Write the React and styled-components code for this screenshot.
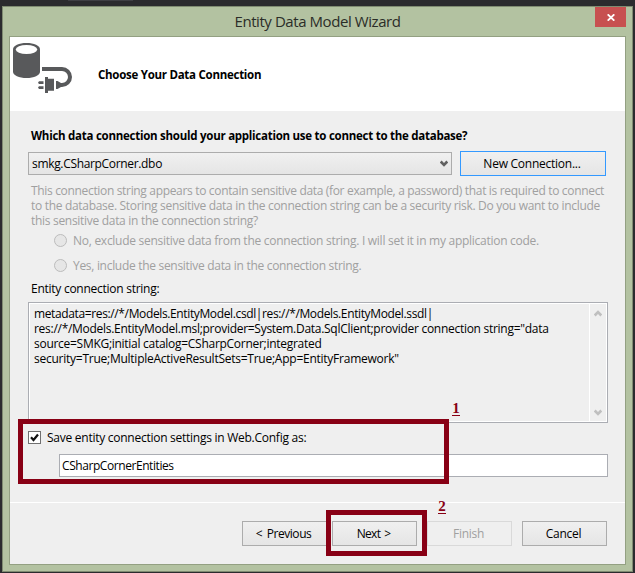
import { useState } from 'react'
import styled, { createGlobalStyle } from 'styled-components'

const GlobalStyle = createGlobalStyle`
    * {
        box-sizing: border-box;
    }

    body {
        margin: 0;
        background-color: #2b2b2e;
        font-family: "Open Sans", "Noto Sans", sans-serif;
        font-size: 12px;
        color: #000;
    }

    button, input {
        font: inherit;
    }
`

const Desktop = styled.div`
    height: 573px;
    padding: 6px 2px 0;
    overflow: hidden;
    background: linear-gradient(#3f3f44, #3f3f44) 68px 0 / 65px 1px no-repeat, #2b2b2e;
`

const Window = styled.div`
    position: relative;
    display: flex;
    flex-direction: column;
    width: 631px;
    height: 566px;
    padding: 0 6px 6px;
    border: 1px solid #7f8b71;
    background-color: #b3c2a1;
`

const TitleBar = styled.div`
    display: flex;
    height: 29px;
    padding-left: 31px;
`

const Title = styled.h1`
    flex: 1;
    margin: 0;
    font-size: 15px;
    font-weight: 400;
    line-height: 29px;
    letter-spacing: -0.43px;
    text-align: center;
    color: #2b2d28;
`

const CloseButton = styled.button`
    display: flex;
    align-items: center;
    justify-content: center;
    width: 31px;
    height: 20px;
    padding: 0;
    border: none;
    background-color: #c75050;
`

const Client = styled.div`
    display: flex;
    flex-direction: column;
    flex: 1;
    border: 1px solid #93a082;
    background-color: #efefef;
`

const Banner = styled.div`
    display: flex;
    height: 74px;
    padding: 6px 0 0 3px;
    background-color: #fff;

    svg {
        flex: none;
    }
`

const Heading = styled.h2`
    margin: 0;
    padding: 23px 0 0 25px;
    font-size: 11.5px;
    font-weight: 700;
    line-height: 18px;
    letter-spacing: -0.27px;
`

const Page = styled.div`
    display: flex;
    flex-direction: column;
    height: 392px;
    padding: 16px 17px 0 18px;
    border-bottom: 1px solid #fff;
`

const Question = styled.h3`
    margin: 0 0 6px 3px;
    font-size: 11.5px;
    font-weight: 700;
    line-height: 18px;
    letter-spacing: -0.26px;
`

const ConnectionRow = styled.div`
    display: flex;
    align-items: center;
    gap: 8px;
    height: 25px;
`

const Combo = styled.div`
    display: flex;
    align-items: center;
    justify-content: space-between;
    width: 424px;
    height: 23px;
    padding: 0 3px;
    border: 1px solid #acacac;
    background: linear-gradient(#f0f0f0, #e5e5e5);
    letter-spacing: -0.33px;
`

const Button = styled.button`
    width: ${p => p.$width || 85}px;
    height: 25px;
    padding: 0 2px 0 0;
    border: 1px solid ${p => (p.$focused ? '#3399ff' : '#acacac')};
    background: linear-gradient(#f0f0f0, #e5e5e5);
    line-height: 22px;
    letter-spacing: ${p => p.$tracking || -0.3}px;
    word-spacing: ${p => p.$wordGap || 0}px;
    color: #000;

    &:disabled {
        border-color: #d9d9d9;
        background: #efefef;
        color: #a0a0a0;
    }
`

const Line = styled.div`
    line-height: 15px;
    letter-spacing: ${p => p.$tracking}px;
    white-space: pre;
`

const Warning = styled.div`
    margin: 7px 0 0 3px;
    color: #a0a0a0;
`

const RadioRow = styled.label`
    display: flex;
    align-items: center;
    gap: 6px;
    height: 25px;
    padding-left: 26px;
    color: #a0a0a0;
`

const RadioGroup = styled.div`
    margin-bottom: 3px;
`

const Radio = styled.span`
    width: 13px;
    height: 13px;
    border: 1px solid #bcbcbc;
    border-radius: 50%;
    background-color: #e6e6e6;
`

const StringLabel = styled.div`
    margin: 0 0 6px 3px;
    line-height: 15px;
    letter-spacing: -0.26px;
`

const StringBox = styled.div`
    display: flex;
    flex: none;
    height: 121px;
    border: 1px solid #abadb3;
    outline: 1px solid #fff;
    outline-offset: -2px;
`

const StringText = styled.div`
    flex: 1;
    padding: 3px 0 0 5px;
`

const ScrollBar = styled.div`
    display: flex;
    flex-direction: column;
    align-items: center;
    justify-content: space-between;
    width: 18px;
    padding: 7px 1px 6px 0;
    border-left: 1px solid #fff;
`

const SaveRow = styled.label`
    display: flex;
    align-items: center;
    gap: 6px;
    height: 15px;
    margin: 7px 0 9px;
`

const CheckBox = styled.span`
    display: flex;
    width: 13px;
    height: 13px;
    border: 1px solid #707070;
    background-color: #fff;
`

const NameInput = styled.input`
    flex: none;
    height: 23px;
    margin-left: 31px;
    padding: 0 2px 1px;
    border: 1px solid #abadb3;
    border-radius: 0;
    outline: none;
    background-color: #fff;
    letter-spacing: -0.43px;
`

const Footer = styled.div`
    display: flex;
    justify-content: flex-end;
    padding: 18px 18px 0 0;
`

const FooterGroup = styled.div`
    display: flex;
    gap: ${p => p.$gap}px;
    margin-left: 10px;
`

// Annotations lie over the window
const Highlight = styled.div`
    position: absolute;
    left: ${p => p.$x}px;
    top: ${p => p.$y}px;
    width: ${p => p.$w}px;
    height: ${p => p.$h}px;
    border: 5px solid #880015;
    pointer-events: none;
`

const StepNumber = styled.div`
    position: absolute;
    left: ${p => p.$x}px;
    top: ${p => p.$y}px;
    width: 8px;
    border-bottom: 1px solid #880015;
    font-family: "Liberation Serif", serif;
    font-size: 15px;
    font-weight: 700;
    line-height: 13px;
    text-align: center;
    color: #880015;
`

function DatabasePlugIcon() {
    return (
        <svg width="60" height="51" viewBox="0 0 60 51">
            <path d="M0 6.5C0 2.5 6 0 13.5 0S27 2.5 27 6.5v22c0 4-6 6.5-13.5 6.5S0 32.5 0 28.5z" fill="#58595b" />
            <ellipse cx="13.5" cy="6.5" rx="10.7" ry="4.5" fill="#fff" />
            <path d="M29 26h20a8 8 0 0 1 0 16h-4" fill="none" stroke="#58595b" strokeWidth="4" />
            <path d="M32 34h3v1.7h6v12h-6v2.3h-3zM43 38h1.5l3.5 2v4l-3.500 2H43z" fill="#58595b" />
            <path d="M26 38.3h4.500v2.700H26l-1-1.300zM26 43.200h4.500v2.700H26l-1-1.300z" fill="#58595b" />
        </svg>
    )
}

function Chevron({ up, color }) {
    return (
        <svg width="8" height="7" viewBox="0 0 8 7">
            <path d={up ? 'M0.7 5.5L4 2.2 7.3 5.5' : 'M0.7 1.5L4 4.8 7.3 1.5'} fill="none" stroke={color} strokeWidth="2.6" />
        </svg>
    )
}

function App() {
    const [name, setName] = useState('CSharpCornerEntities')

    return (
        <Desktop>
            <GlobalStyle />
            <Window>
                <TitleBar>
                    <Title>Entity Data Model Wizard</Title>
                    <CloseButton aria-label="Close">
                        <svg width="8" height="7" viewBox="0 0 8 7">
                            <path d="M0.7 0.3L7.3 6.7M7.3 0.3L0.7 6.7" stroke="#fff" strokeWidth="1.8" />
                        </svg>
                    </CloseButton>
                </TitleBar>
                <Client>
                    <Banner>
                        <DatabasePlugIcon />
                        <Heading>Choose Your Data Connection</Heading>
                    </Banner>
                    <Page>
                        <Question>Which data connection should your application use to connect to the database?</Question>
                        <ConnectionRow>
                            <Combo>
                                smkg.CSharpCorner.dbo
                                <Chevron color="#606060" />
                            </Combo>
                            <Button $width={146} $tracking={-0.25} $focused>New Connection...</Button>
                        </ConnectionRow>
                        <Warning>
                            <Line $tracking={-0.33}>This connection string appears to contain sensitive data (for example, a password) that is required to connect</Line>
                            <Line $tracking={-0.31}>to the database. Storing sensitive data in the connection string can be a security risk. Do you want to include</Line>
                            <Line $tracking={-0.3}>this sensitive data in the connection string?</Line>
                        </Warning>
                        <RadioGroup>
                            <RadioRow>
                                <Radio />
                                <Line $tracking={-0.27}>No, exclude sensitive data from the connection string. I will set it in my application code.</Line>
                            </RadioRow>
                            <RadioRow>
                                <Radio />
                                <Line $tracking={-0.3}>Yes, include the sensitive data in the connection string.</Line>
                            </RadioRow>
                        </RadioGroup>
                        <StringLabel>Entity connection string:</StringLabel>
                        <StringBox>
                            <StringText>
                                <Line $tracking={-0.37}>metadata=res://*/Models.EntityModel.csdl|res://*/Models.EntityModel.ssdl|</Line>
                                <Line $tracking={-0.28}>res://*/Models.EntityModel.msl;provider=System.Data.SqlClient;provider connection string="data</Line>
                                <Line $tracking={-0.28}>source=SMKG;initial catalog=CSharpCorner;integrated</Line>
                                <Line $tracking={-0.25}>security=True;MultipleActiveResultSets=True;App=EntityFramework"</Line>
                            </StringText>
                            <ScrollBar>
                                <Chevron up color="#bfbfbf" />
                                <Chevron color="#bfbfbf" />
                            </ScrollBar>
                        </StringBox>
                        <SaveRow>
                            <CheckBox>
                                <svg width="11" height="11" viewBox="0 0 11 11">
                                    <path d="M2 5.2L4.5 8 9 2.5" fill="none" stroke="#111" strokeWidth="2.2" />
                                </svg>
                            </CheckBox>
                            <Line $tracking={-0.26}>Save entity connection settings in Web.Config as:</Line>
                        </SaveRow>
                        <NameInput value={name} onChange={e => setName(e.target.value)} />
                    </Page>
                    <Footer>
                        <FooterGroup $gap={5}>
                            <Button $tracking={-0.45} $wordGap={2}>&lt; Previous</Button>
                            <Button $tracking={-0.7} $wordGap={1.5}>Next &gt;</Button>
                        </FooterGroup>
                        <FooterGroup $gap={10}>
                            <Button disabled>Finish</Button>
                            <Button>Cancel</Button>
                        </FooterGroup>
                    </Footer>
                </Client>
                <Highlight $x={15} $y={412} $w={431} $h={65} />
                <StepNumber $x={449} $y={395}>1</StepNumber>
                <Highlight $x={323} $y={503} $w={101} $h={46} />
                <StepNumber $x={435} $y={493}>2</StepNumber>
            </Window>
        </Desktop>
    )
}

export default App
